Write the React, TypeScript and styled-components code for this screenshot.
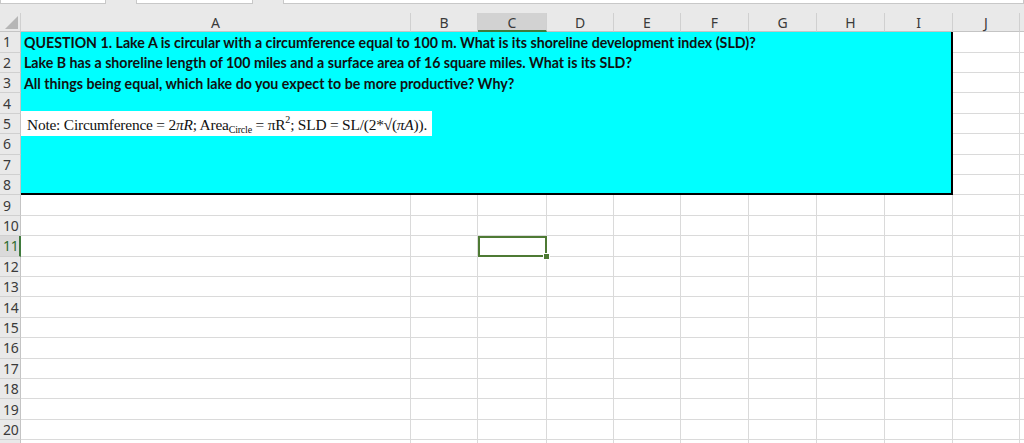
import React from 'react';
import styled, { createGlobalStyle } from 'styled-components';

const GlobalStyle = createGlobalStyle`
  html, body {
    margin: 0;
    padding: 0;
    background: #ffffff;
    overflow: hidden;
  }
`;

const ROW_H = 20.4;
const HEAD_H = 19.3;
const COLS = ['A', 'B', 'C', 'D', 'E', 'F', 'G', 'H', 'I', 'J', 'K'];
const WIDTHS = [390, 67, 69, 67, 67, 68, 68, 68, 68, 67, 60];
const ROW_COUNT = 21;
const LAST_LABELLED_ROW = 20;
const SELECTED_COL = 'C';
const SELECTED_ROW = 11;

const Page = styled.div`
  width: 1024px;
  height: 443px;
  overflow: hidden;
  background: #e9e9e9;
  font-family: 'Noto Sans', 'Open Sans', sans-serif;
`;

const TopStrip = styled.div`
  height: 13px;
  display: flex;
  gap: 30px;
`;

const StripBox = styled.div<{ $w: number }>`
  width: ${(p) => p.$w}px;
  height: 3px;
  background: #ffffff;
  border: 1px solid #c8c8c8;
  border-top: 0;
`;

const Sheet = styled.div`
  display: grid;
  grid-template-columns: 21px ${WIDTHS.map((w) => `${w}px`).join(' ')};
  grid-template-rows: ${HEAD_H}px repeat(${ROW_COUNT}, ${ROW_H}px);
  background: #ffffff;
`;

const Corner = styled.div`
  background: #e9e9e9;
  border-right: 1px solid #d0d0d0;
  border-bottom: 1px solid #c4c4c4;
  box-sizing: border-box;
  display: flex;
  align-items: flex-end;
  justify-content: flex-end;
  padding: 0 2px 2px 0;

  &::after {
    content: '';
    width: 0;
    height: 0;
    border-left: 13px solid transparent;
    border-bottom: 13px solid #b6b6b6;
  }
`;

const ColHead = styled.div<{ $active?: boolean }>`
  background: ${(p) => (p.$active ? '#d2d2d2' : '#e9e9e9')};
  border-right: 1px solid #d0d0d0;
  border-bottom: ${(p) => (p.$active ? '2px solid #3f7a3c' : '1px solid #c4c4c4')};
  box-sizing: border-box;
  display: flex;
  align-items: center;
  justify-content: center;
  font-size: 14px;
  color: #3a3a3a;
  padding-top: 1px;
`;

const RowHead = styled.div<{ $active?: boolean }>`
  background: ${(p) => (p.$active ? '#dadada' : '#e9e9e9')};
  border-right: ${(p) => (p.$active ? '2px solid #3f7a3c' : '1px solid #c4c4c4')};
  border-bottom: 1px solid #d0d0d0;
  box-sizing: border-box;
  display: flex;
  align-items: center;
  padding-left: 3px;
  font-size: 14px;
  letter-spacing: -0.3px;
  color: ${(p) => (p.$active ? '#2f6b2f' : '#3a3a3a')};
`;

const Cell = styled.div`
  border-right: 1px solid #dadada;
  border-bottom: 1px solid #dadada;
  box-sizing: border-box;
  background: #ffffff;
`;

const SelectedCell = styled(Cell)`
  position: relative;
  border: 2px solid #4e7a34;

  &::after {
    content: '';
    position: absolute;
    right: -5px;
    bottom: -5px;
    width: 5px;
    height: 5px;
    background: #4e7a34;
    border: 1px solid #ffffff;
  }
`;

/* filled range A1:I8 with the question text spilling across it */
const Block = styled.div`
  grid-column: 2 / 11;
  grid-row: 2 / 10;
  background: #00ffff;
  border-right: 2px solid #000000;
  border-bottom: 2px solid #000000;
  box-sizing: border-box;
  display: grid;
  grid-template-rows: repeat(8, ${ROW_H}px);
`;

const Line = styled.div`
  display: flex;
  align-items: center;
  padding-left: 3px;
  white-space: nowrap;
  font-family: Lato, 'Open Sans', sans-serif;
  font-weight: 700;
  font-size: 14.2px;
  color: #111111;
`;

const NoteRow = styled.div`
  display: flex;
  align-items: center;
`;

const Note = styled.div`
  background: #ffffff;
  width: 411px;
  height: 25px;
  margin-top: -2px;
  box-sizing: border-box;
  padding: 3px 0 0 6px;
  font-family: 'Liberation Serif', 'Times New Roman', serif;
  font-size: 15.4px;
  letter-spacing: -0.2px;
  color: #111111;
  white-space: nowrap;

  i {
    font-style: italic;
  }

  sub {
    font-size: 10px;
    vertical-align: -3px;
  }

  sup {
    font-size: 10px;
    vertical-align: 7px;
  }
`;

const questionLines = [
  'QUESTION 1. Lake A is circular with a circumference equal to 100 m. What is its shoreline development index (SLD)?',
  'Lake B has a shoreline length of 100 miles and a surface area of 16 square miles. What is its SLD?',
  'All things being equal, which lake do you expect to be more productive? Why?',
  '',
];

export default function App() {
  const rows = Array.from({ length: ROW_COUNT }, (_, i) => i + 1);

  return (
    <>
      <GlobalStyle />
      <Page>
        <TopStrip>
          <StripBox $w={105} />
          <StripBox $w={116} />
          <StripBox $w={745} />
        </TopStrip>
        <Sheet>
          <Corner />
          {COLS.map((c) => (
            <ColHead key={c} $active={c === SELECTED_COL}>
              {c === 'K' ? '' : c}
            </ColHead>
          ))}

          {rows.map((r) => (
            <React.Fragment key={r}>
              <RowHead
                $active={r === SELECTED_ROW}
                style={{ gridRow: r + 1, gridColumn: 1 }}
              >
                {r <= LAST_LABELLED_ROW ? r : ''}
              </RowHead>
              {COLS.map((c, ci) => {
                // the filled range covers A..I on rows 1-8
                if (r <= 8 && ci < 9) return null;
                const pos = { gridRow: r + 1, gridColumn: ci + 2 };
                if (r === SELECTED_ROW && c === SELECTED_COL) {
                  return <SelectedCell key={c} style={pos} />;
                }
                return <Cell key={c} style={pos} />;
              })}
            </React.Fragment>
          ))}

          <Block>
            {questionLines.map((t, i) => (
              <Line key={i}>{t}</Line>
            ))}
            <NoteRow>
              <Note>
                Note: Circumference = 2<i>πR</i>; Area<sub>Circle</sub> = πR
                <sup>2</sup>; SLD = SL/(2*√(<i>πA</i>)).
              </Note>
            </NoteRow>
          </Block>
        </Sheet>
      </Page>
    </>
  );
}
